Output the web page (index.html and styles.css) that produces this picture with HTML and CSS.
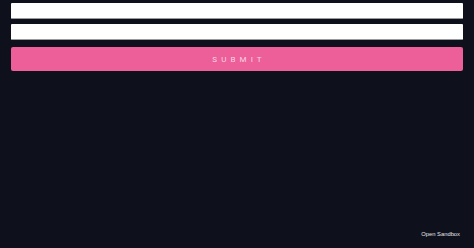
FILE: index.html
```html
<!DOCTYPE html>
<html>
<head>
<meta charset="utf-8">
<link rel="stylesheet" href="styles.css">
</head>
<body>
<form class="form">
  <input class="field" type="text">
  <input class="field" type="text">
  <button class="submit" type="button">Submit</button>
</form>
<div class="sandbox">Open Sandbox</div>
</body>
</html>
```
FILE: styles.css
```css
html, body {
  margin: 0;
  padding: 0;
  height: 100%;
}
body {
  background: #0e111b;
  font-family: Roboto, "Liberation Sans", sans-serif;
  overflow: hidden;
}
.form {
  display: flex;
  flex-direction: column;
  padding: 3px 11px 0 11px;
}
.field {
  display: block;
  box-sizing: border-box;
  height: 16px;
  margin: 0 0 5px 0;
  border: none;
  border-bottom: 1px solid #9a9a9a;
  background: #ffffff;
  border-radius: 1px;
  padding: 0 4px;
}
.field + .field {
  margin-bottom: 7px;
}
.submit {
  height: 24px;
  border: none;
  border-radius: 2px;
  background: #ec5f98;
  color: #fbd3e3;
  font-family: Roboto, "Liberation Sans", sans-serif;
  font-size: 8px;
  letter-spacing: 4.1px;
  text-transform: uppercase;
  padding: 0 0 0 4px;
}
.sandbox {
  position: absolute;
  right: 14px;
  bottom: 11px;
  font-family: "Liberation Sans", Arial, sans-serif;
  font-size: 5.8px;
  color: #e6e7ea;
}
```
